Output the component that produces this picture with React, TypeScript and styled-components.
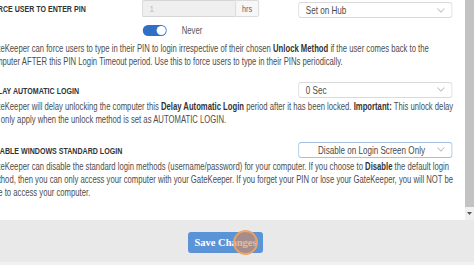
import React from "react";
import styled, { createGlobalStyle } from "styled-components";

// The settings panel is rendered in a horizontally condensed form.
const SX = 0.77;
const u = (px: number) => `${(px / SX).toFixed(2)}px`;

const GlobalStyle = createGlobalStyle`
  html, body { margin: 0; padding: 0; background: #fff; overflow: hidden; }
  body { font-family: "Liberation Sans", Arial, sans-serif; }
`;

const Page = styled.div`
  width: 474px;
  height: 265px;
  display: flex;
  flex-direction: column;
  overflow: hidden;
`;

const ScrollArea = styled.div`
  height: 220px;
  display: flex;
  background: #fff;
`;

const Viewport = styled.div`
  flex: 1;
  min-width: 0;
  overflow: hidden;
`;

const Content = styled.div`
  width: ${u(477)};
  box-sizing: border-box;
  margin-left: -12px;
  padding-right: ${u(13)};
  transform: scaleX(${SX});
  transform-origin: 0 0;
  color: #4d4d4d;
`;

const Section = styled.section<{ $gap?: number }>`
  margin-bottom: ${(p) => p.$gap ?? 15}px;
`;

const Row = styled.div`
  display: grid;
  grid-template-columns: minmax(0, 1fr) ${u(156)} ${u(154)};
  align-items: center;
`;

const Title = styled.div<{ $alignTop?: boolean }>`
  align-self: ${(p) => (p.$alignTop ? "start" : "center")};
  line-height: 17px;
  padding-top: 1px;
  font-size: 9.2px;
  font-weight: 700;
  color: #333;
  text-transform: uppercase;
  white-space: nowrap;
`;

const Middle = styled.div`
  align-self: start;
  width: ${u(117)};
  display: flex;
  flex-direction: column;
  gap: 8px;
`;

const InputGroup = styled.div`
  display: flex;
  height: 17px;
`;

const NumberInput = styled.div`
  flex: 1;
  background: #efefef;
  border: 1px solid #d6d6d6;
  border-right: none;
  border-radius: 2px 0 0 2px;
  color: #bbb;
  font-size: 9.5px;
  line-height: 15px;
  padding-left: ${u(7)};
`;

const Addon = styled.div`
  width: ${u(24)};
  box-sizing: border-box;
  background: #f7f7f7;
  border: 1px solid #d6d6d6;
  border-radius: 0 2px 2px 0;
  color: #666;
  font-size: 9.5px;
  line-height: 15px;
  text-align: center;
`;

const ToggleRow = styled.div`
  display: flex;
  align-items: center;
  gap: ${u(15)};
  padding-left: 1px;
  font-size: 10px;
  color: #555;
`;

const Toggle = styled.div`
  width: ${u(24)};
  height: 11px;
  box-sizing: border-box;
  border-radius: ${u(6)} / 6px;
  background: #2f6fc6;
  display: flex;
  align-items: center;
  justify-content: flex-end;
  padding: 0 ${u(1)};
`;

const Knob = styled.div`
  width: ${u(9)};
  height: 9px;
  border-radius: 50%;
  background: #fff;
`;

const Select = styled.div<{ $focus?: boolean; $offset?: number }>`
  align-self: start;
  margin-top: ${(p) => p.$offset ?? 0}px;
  height: 16px;
  box-sizing: border-box;
  border: 1px solid ${(p) => (p.$focus ? "#a6c0e2" : "#dadada")};
  border-radius: ${u(3)} / 3px;
  background: #fff;
  display: flex;
  align-items: center;
  justify-content: space-between;
  padding: 0 ${u(6)} 0 ${u(7)};
  font-size: 10.5px;
  color: #4a4a4a;
  white-space: nowrap;
`;

const SelectText = styled.span<{ $center?: boolean }>`
  flex: 1;
  text-align: ${(p) => (p.$center ? "center" : "left")};
`;

const Desc = styled.p<{ $top?: number }>`
  margin: ${(p) => p.$top ?? 0}px 0 0;
  font-size: 10px;
  line-height: 13.4px;
  white-space: nowrap;
`;

const B = styled.span`
  font-weight: 700;
  color: #333;
`;

const Scrollbar = styled.div`
  width: 9px;
  display: flex;
  flex-direction: column;
  background: #f0f0f0;
`;

const Thumb = styled.div`
  flex: 1;
  background: #c3c3c3;
`;

const ArrowButton = styled.div`
  height: 13px;
  display: flex;
  align-items: center;
  justify-content: center;
`;

const Footer = styled.div`
  height: 45px;
  box-sizing: border-box;
  background: #e9e9e9;
  border-bottom: 3px solid #f1f1f1;
  display: flex;
  align-items: flex-start;
  padding: 12px 0 0 188px;
`;

const SaveButton = styled.button`
  position: relative;
  width: 75px;
  height: 21px;
  border: none;
  border-radius: 3px;
  background: #5b93d7;
  color: #fff;
  font-family: "Liberation Serif", serif;
  font-weight: bold;
  font-size: 10.5px;
  padding: 0;
`;

const ClickMark = styled.span`
  position: absolute;
  left: 45px;
  top: -2px;
  width: 25px;
  height: 25px;
  box-sizing: border-box;
  border-radius: 50%;
  background: rgba(214, 138, 92, 0.6);
  border: 2px solid rgba(240, 165, 100, 0.85);
`;

const Chevron = () => (
  <svg width={(8 / SX).toFixed(1)} height="5" viewBox="0 0 8 5" preserveAspectRatio="none">
    <path d="M0.5 0.5 L4 4 L7.5 0.5" fill="none" stroke="#bdbdbd" strokeWidth="1" />
  </svg>
);

const DownArrow = () => (
  <svg width="5" height="3" viewBox="0 0 5 3">
    <path d="M0 0 H5 L2.5 3 Z" fill="#555" />
  </svg>
);

export default function App() {
  return (
    <>
      <GlobalStyle />
      <Page>
        <ScrollArea>
          <Viewport>
            <Content>
              <Section $gap={13}>
                <Row>
                  <Title $alignTop>Force user to enter PIN</Title>
                  <Middle>
                    <InputGroup>
                      <NumberInput>1</NumberInput>
                      <Addon>hrs</Addon>
                    </InputGroup>
                    <ToggleRow>
                      <Toggle>
                        <Knob />
                      </Toggle>
                      Never
                    </ToggleRow>
                  </Middle>
                  <Select $offset={2}>
                    <SelectText>Set on Hub</SelectText>
                    <Chevron />
                  </Select>
                </Row>
                <Desc $top={6}>
                  GateKeeper can force users to type in their PIN to login irrespective of their chosen <B>Unlock Method</B> if the user comes back to the
                  <br />
                  computer AFTER this PIN Login Timeout period. Use this to force users to type in their PINs periodically.
                </Desc>
              </Section>
              <Section>
                <Row>
                  <Title>Delay automatic login</Title>
                  <span />
                  <Select>
                    <SelectText>0 Sec</SelectText>
                    <Chevron />
                  </Select>
                </Row>
                <Desc>
                  GateKeeper will delay unlocking the computer this <B>Delay Automatic Login</B> period after it has been locked. <B>Important:</B> This unlock delay
                  <br />
                  will only apply when the unlock method is set as AUTOMATIC LOGIN.
                </Desc>
              </Section>
              <Section>
                <Row>
                  <Title>Disable Windows standard login</Title>
                  <span />
                  <Select $focus>
                    <SelectText $center>Disable on Login Screen Only</SelectText>
                    <Chevron />
                  </Select>
                </Row>
                <Desc>
                  GateKeeper can disable the standard login methods (username/password) for your computer. If you choose to <B>Disable</B> the default login
                  <br />
                  method, then you can only access your computer with your GateKeeper. If you forget your PIN or lose your GateKeeper, you will NOT be
                  <br />
                  able to access your computer.
                </Desc>
              </Section>
            </Content>
          </Viewport>
          <Scrollbar>
            <Thumb />
            <ArrowButton>
              <DownArrow />
            </ArrowButton>
          </Scrollbar>
        </ScrollArea>
        <Footer>
          <SaveButton>
            Save Changes
            <ClickMark />
          </SaveButton>
        </Footer>
      </Page>
    </>
  );
}
